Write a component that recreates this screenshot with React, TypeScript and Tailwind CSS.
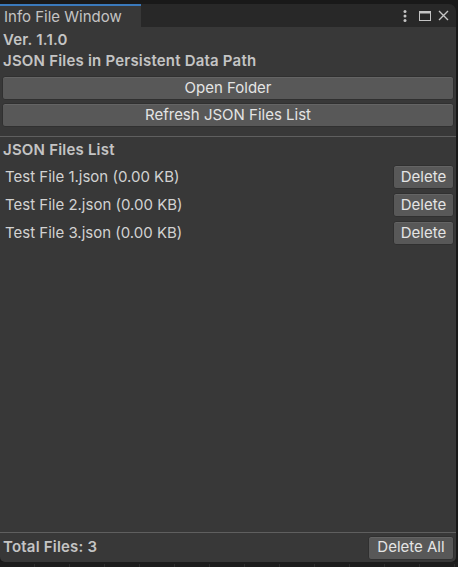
import React from "react";

const files = [
  { name: "Test File 1.json", size: "0.00 KB" },
  { name: "Test File 2.json", size: "0.00 KB" },
  { name: "Test File 3.json", size: "0.00 KB" },
];

function UnityButton({ children, className = "" }: { children: React.ReactNode; className?: string }) {
  return (
    <button
      className={`flex items-center justify-center rounded-[3px] border border-[#303030] bg-[#585858] text-[15px] text-[#e4e4e4] shadow-[inset_0_1px_0_#646464] ${className}`}
    >
      {children}
    </button>
  );
}

export default function App() {
  return (
    <div
      className="flex h-[567px] w-[458px] flex-col overflow-hidden bg-[#191919]"
      style={{ fontFamily: "Inter, 'Noto Sans', sans-serif" }}
    >
      {/* editor window */}
      <div className="mr-[2px] flex h-[562px] flex-col overflow-hidden rounded-b-[5px]">
        <div className="h-[4px] bg-[#191919]" />

        {/* tab bar */}
        <div className="flex h-[23px] items-stretch rounded-tr-[7px] bg-[#282828]">
          <div className="flex w-[141px] items-center border-t-2 border-[#3a79bb] bg-[#383838] pl-[4px] text-[15px] leading-none text-[#c4c4c4]">
            Info File Window
          </div>
          <div className="flex-1" />
          <div className="flex items-center gap-[7px] pr-[7px] text-[#c4c4c4]">
            <svg width="4" height="14" viewBox="0 0 4 14">
              <circle cx="2" cy="2.5" r="1.5" fill="#c4c4c4" />
              <circle cx="2" cy="7" r="1.5" fill="#c4c4c4" />
              <circle cx="2" cy="11.5" r="1.5" fill="#c4c4c4" />
            </svg>
            <svg width="12" height="10" viewBox="0 0 12 10" className="ml-[5px]">
              <rect x="0.5" y="0.5" width="11" height="9" fill="none" stroke="#c4c4c4" />
              <rect x="0.5" y="0.5" width="11" height="2" fill="#c4c4c4" />
            </svg>
            <svg width="11" height="11" viewBox="0 0 11 11">
              <path d="M1 1 L10 10 M10 1 L1 10" stroke="#c4c4c4" strokeWidth="1.4" />
            </svg>
          </div>
        </div>

        {/* content */}
        <div className="flex flex-1 flex-col bg-[#383838]">
          <div className="flex flex-col px-[2px] pt-[3px]">
            <div className="flex h-[21px] items-center pl-[1px] text-[15px] font-semibold tracking-[0.2px] text-[#c4c4c4]">
              Ver. 1.1.0
            </div>
            <div className="flex h-[21px] items-center pl-[1px] text-[15px] font-semibold tracking-[0.2px] text-[#c4c4c4]">
              JSON Files in Persistent Data Path
            </div>
            <UnityButton className="mt-[4px] h-[24px] w-full">Open Folder</UnityButton>
            <UnityButton className="mt-[3px] h-[24px] w-full">Refresh JSON Files List</UnityButton>
          </div>

          <div className="mt-[9px] h-px bg-[#5f5f5f]" />

          <div className="flex flex-col px-[2px] pt-[3px]">
            <div className="flex h-[20px] items-center pl-[1px] text-[15px] font-semibold tracking-[0.2px] text-[#c4c4c4]">
              JSON Files List
            </div>
            <div className="mt-[5px] flex flex-col gap-[4px]">
              {files.map((f) => (
                <div key={f.name} className="flex h-[24px] items-center justify-between">
                  <span className="pl-[3px] text-[15px] text-[#d2d2d2]">
                    {f.name} ({f.size})
                  </span>
                  <UnityButton className="h-[24px] w-[61px]">Delete</UnityButton>
                </div>
              ))}
            </div>
          </div>

          <div className="flex-1" />

          <div className="h-px bg-[#5f5f5f]" />
          <div className="flex h-[29px] items-center justify-between px-[2px]">
            <span className="pl-[1px] text-[15px] font-semibold tracking-[0.2px] text-[#c4c4c4]">Total Files: 3</span>
            <UnityButton className="h-[24px] w-[86px]">Delete All</UnityButton>
          </div>
        </div>
      </div>

      {/* ruler ticks below window */}
      <div className="flex flex-1 items-end bg-[#1d1d1d]">
        {Array.from({ length: 13 }).map((_, i) => (
          <div key={i} className="h-[3px] w-[35px] border-r border-[#2e2e2e]" />
        ))}
      </div>
    </div>
  );
}
